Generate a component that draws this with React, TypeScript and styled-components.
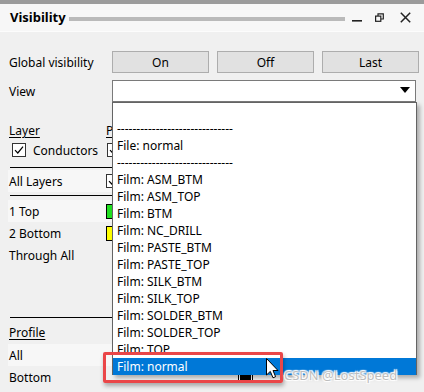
import * as React from 'react';
import styled, { createGlobalStyle } from 'styled-components';

const GlobalStyle = createGlobalStyle`
	html, body {
		margin: 0;
		padding: 0;
		background: #f0f0f0;
	}
	body {
		font-family: 'Noto Sans', 'Open Sans', sans-serif;
		font-size: 12px;
		color: #000;
	}
`;

const Window = styled.div`
	position: relative;
	width: 424px;
	height: 392px;
	overflow: hidden;
	background: #f0f0f0;
`;

const TopStrip = styled.div`
	height: 4px;
	background: #9b9b9b;
`;

const TitleBar = styled.div`
	display: flex;
	align-items: center;
	height: 27px;
	padding: 0 13px 0 10px;
	background: #f7f7f7;
	border-bottom: 1px solid #fcfcfc;
`;

const Title = styled.span`
	font-weight: 700;
	font-size: 13px;
	margin-top: -2px;
`;

const Grip = styled.div`
	flex: 1;
	height: 4px;
	margin: 2px 7px 0 3px;
	background: #bababa;
`;

const TitleIcon = styled.svg<{ $gap?: number }>`
	display: block;
	margin-left: ${p => p.$gap || 0}px;
`;

const Body = styled.div`
	padding: 0 8px 0 9px;
`;

const Row = styled.div<{ $top: number }>`
	display: flex;
	align-items: center;
	height: 22px;
	margin-top: ${p => p.$top}px;
`;

const Label = styled.span`
	width: 103px;
	flex: none;
`;

const Buttons = styled.div`
	display: flex;
	gap: 8px;
`;

const Button = styled.button`
	box-sizing: border-box;
	width: 97px;
	height: 22px;
	padding: 0;
	border: 1px solid #adadad;
	background: #e1e1e1;
	font: inherit;
	color: #000;
`;

const Combo = styled.div`
	box-sizing: border-box;
	position: relative;
	width: 305px;
	height: 22px;
	border: 1px solid #7a7a7a;
	background: #fff;
	svg {
		position: absolute;
		right: 5px;
		top: 6px;
	}
`;

const Section = styled.div<{ $top: number }>`
	margin-top: ${p => p.$top}px;
`;

const Header = styled.div`
	display: flex;
	height: 16px;
	line-height: 16px;
	span {
		text-decoration: underline;
		text-underline-offset: 2px;
	}
`;

const NameCol = styled.div<{ $w?: number }>`
	width: ${p => p.$w || 97}px;
	flex: none;
	display: flex;
	align-items: center;
`;

const CheckRow = styled.div`
	display: flex;
	align-items: center;
	height: 22px;
	margin-left: 3px;
`;

const Box = styled.span`
	box-sizing: border-box;
	display: inline-flex;
	align-items: center;
	justify-content: center;
	width: 14px;
	height: 14px;
	border: 1px solid #333;
	background: #fff;
	flex: none;
`;

const CheckText = styled.span`
	margin-left: 7px;
`;

const Divider = styled.div<{ $top: number }>`
	height: 1px;
	width: 110px;
	background: #000;
	margin-top: ${p => p.$top}px;
	margin-left: 1px;
`;

const ListRow = styled.div<{ $light?: boolean; $top?: number }>`
	display: flex;
	align-items: center;
	height: 22px;
	margin-top: ${p => p.$top || 0}px;
	margin-left: -1px;
	padding-left: 1px;
	background: ${p => (p.$light ? '#f7f7f7' : 'transparent')};
`;

const Swatch = styled.span<{ $color: string }>`
	box-sizing: border-box;
	display: block;
	width: 14px;
	height: 15px;
	border: 1px solid #000;
	background: ${p => p.$color};
`;

const ProfileSwatch = styled.span`
	box-sizing: border-box;
	display: block;
	width: 15px;
	height: 11px;
	margin-left: 132px;
	border: 1px solid #000;
	padding: 1px;
	background: #fff;
	&::after {
		content: '';
		display: block;
		height: 100%;
		background: #000;
	}
`;

const Dropdown = styled.div`
	position: absolute;
	left: 112px;
	top: 102px;
	box-sizing: border-box;
	width: 305px;
	height: 273px;
	border: 1px solid #646464;
	background: #fff;
	box-shadow: 3px 3px 4px rgba(0, 0, 0, 0.28);
`;

const Item = styled.div<{ $selected?: boolean }>`
	height: 17px;
	line-height: 17px;
	padding-left: 4px;
	white-space: nowrap;
	background: ${p => (p.$selected ? '#0078d7' : 'transparent')};
	color: ${p => (p.$selected ? '#fff' : '#000')};
`;

const Marker = styled.div`
	position: absolute;
	left: 103px;
	top: 352px;
	box-sizing: border-box;
	width: 180px;
	height: 31px;
	border: 3px solid #ea4648;
	border-radius: 2px;
	box-shadow: 1px 3px 4px rgba(0, 0, 0, 0.3);
`;

const Cursor = styled.svg`
	position: absolute;
	left: 266px;
	top: 358px;
`;

const Watermark = styled.div`
	position: absolute;
	left: 284px;
	top: 366px;
	font-size: 13px;
	color: #bdbdbd;
	text-shadow: 0 0 1px #fff, 0 0 1px #fff, 1px 1px 1px #fff, -1px -1px 1px #fff, 1px -1px 1px #fff, -1px 1px 1px #fff;
	white-space: nowrap;
`;

const Check = () => (
	<svg width="10" height="10" viewBox="0 0 10 10">
		<path d="M1 5.2 L3.8 8 L9 1.6" fill="none" stroke="#000" strokeWidth="1.2" />
	</svg>
);

const films = [
	'ASM_BTM',
	'ASM_TOP',
	'BTM',
	'NC_DRILL',
	'PASTE_BTM',
	'PASTE_TOP',
	'SILK_BTM',
	'SILK_TOP',
	'SOLDER_BTM',
	'SOLDER_TOP',
	'TOP',
];

const dashes = '------------------------------';

export default function App() {
	return (
		<Window>
			<GlobalStyle />
			<TopStrip />
			<TitleBar>
				<Title>Visibility</Title>
				<Grip />
				<TitleIcon width="10" height="10" viewBox="0 0 10 10">
					<rect x="0" y="7" width="10" height="1.6" fill="#222" />
				</TitleIcon>
				<TitleIcon width="9" height="9" viewBox="0 0 9 9" $gap={13}>
					<rect x="0.6" y="3.1" width="5.2" height="5.2" fill="none" stroke="#222" strokeWidth="1.2" />
					<path d="M3 3 V0.8 H8.3 V6 H6" fill="none" stroke="#222" strokeWidth="1.2" />
				</TitleIcon>
				<TitleIcon width="11" height="11" viewBox="0 0 11 11" $gap={16}>
					<path d="M0.8 0.8 L10.2 10.2 M10.2 0.8 L0.8 10.2" stroke="#222" strokeWidth="1.5" />
				</TitleIcon>
			</TitleBar>
			<Body>
				<Row $top={19}>
					<Label>Global visibility</Label>
					<Buttons>
						<Button>On</Button>
						<Button>Off</Button>
						<Button>Last</Button>
					</Buttons>
				</Row>
				<Row $top={7}>
					<Label>View</Label>
					<Combo>
						<svg width="10" height="6" viewBox="0 0 10 6">
							<path d="M0 0 H10 L5 6 Z" fill="#000" />
						</svg>
					</Combo>
				</Row>
				<Section $top={21}>
					<Header>
						<NameCol>
							<span>Layer</span>
						</NameCol>
						<span>P</span>
					</Header>
					<CheckRow>
						<NameCol $w={95}>
							<Box>
								<Check />
							</Box>
							<CheckText>Conductors</CheckText>
						</NameCol>
						<Box>
							<Check />
						</Box>
					</CheckRow>
					<Divider $top={6} />
					<ListRow $light $top={2}>
						<NameCol>All Layers</NameCol>
						<Box>
							<Check />
						</Box>
					</ListRow>
					<Divider $top={3} />
					<ListRow $light $top={4}>
						<NameCol>1 Top</NameCol>
						<Swatch $color="#22e022" />
					</ListRow>
					<ListRow>
						<NameCol>2 Bottom</NameCol>
						<Swatch $color="#ffff00" />
					</ListRow>
					<ListRow>
						<NameCol>Through All</NameCol>
					</ListRow>
				</Section>
				<Divider $top={51} />
				<Section $top={7}>
					<Header>
						<NameCol>
							<span>Profile</span>
						</NameCol>
					</Header>
					<ListRow $light $top={3}>
						<NameCol>All</NameCol>
						<ProfileSwatch />
					</ListRow>
					<ListRow>
						<NameCol>Bottom</NameCol>
						<ProfileSwatch />
					</ListRow>
					<ListRow>
						<NameCol />
						<ProfileSwatch />
					</ListRow>
				</Section>
			</Body>
			<Dropdown>
				<Item />
				<Item>{dashes}</Item>
				<Item>File: normal</Item>
				<Item>{dashes}</Item>
				{films.map(f => (
					<Item key={f}>Film: {f}</Item>
				))}
				<Item $selected>Film: normal</Item>
			</Dropdown>
			<Marker />
			<Watermark>CSDN @LostSpeed</Watermark>
			<Cursor width="13" height="21" viewBox="0 0 13 21">
				<path
					d="M0.5 0.5 V17 L4.3 13.4 L7 19.8 L9.6 18.7 L7 12.5 H12 Z"
					fill="#fff"
					stroke="#000"
					strokeWidth="1"
					strokeLinejoin="round"
				/>
			</Cursor>
		</Window>
	);
}
